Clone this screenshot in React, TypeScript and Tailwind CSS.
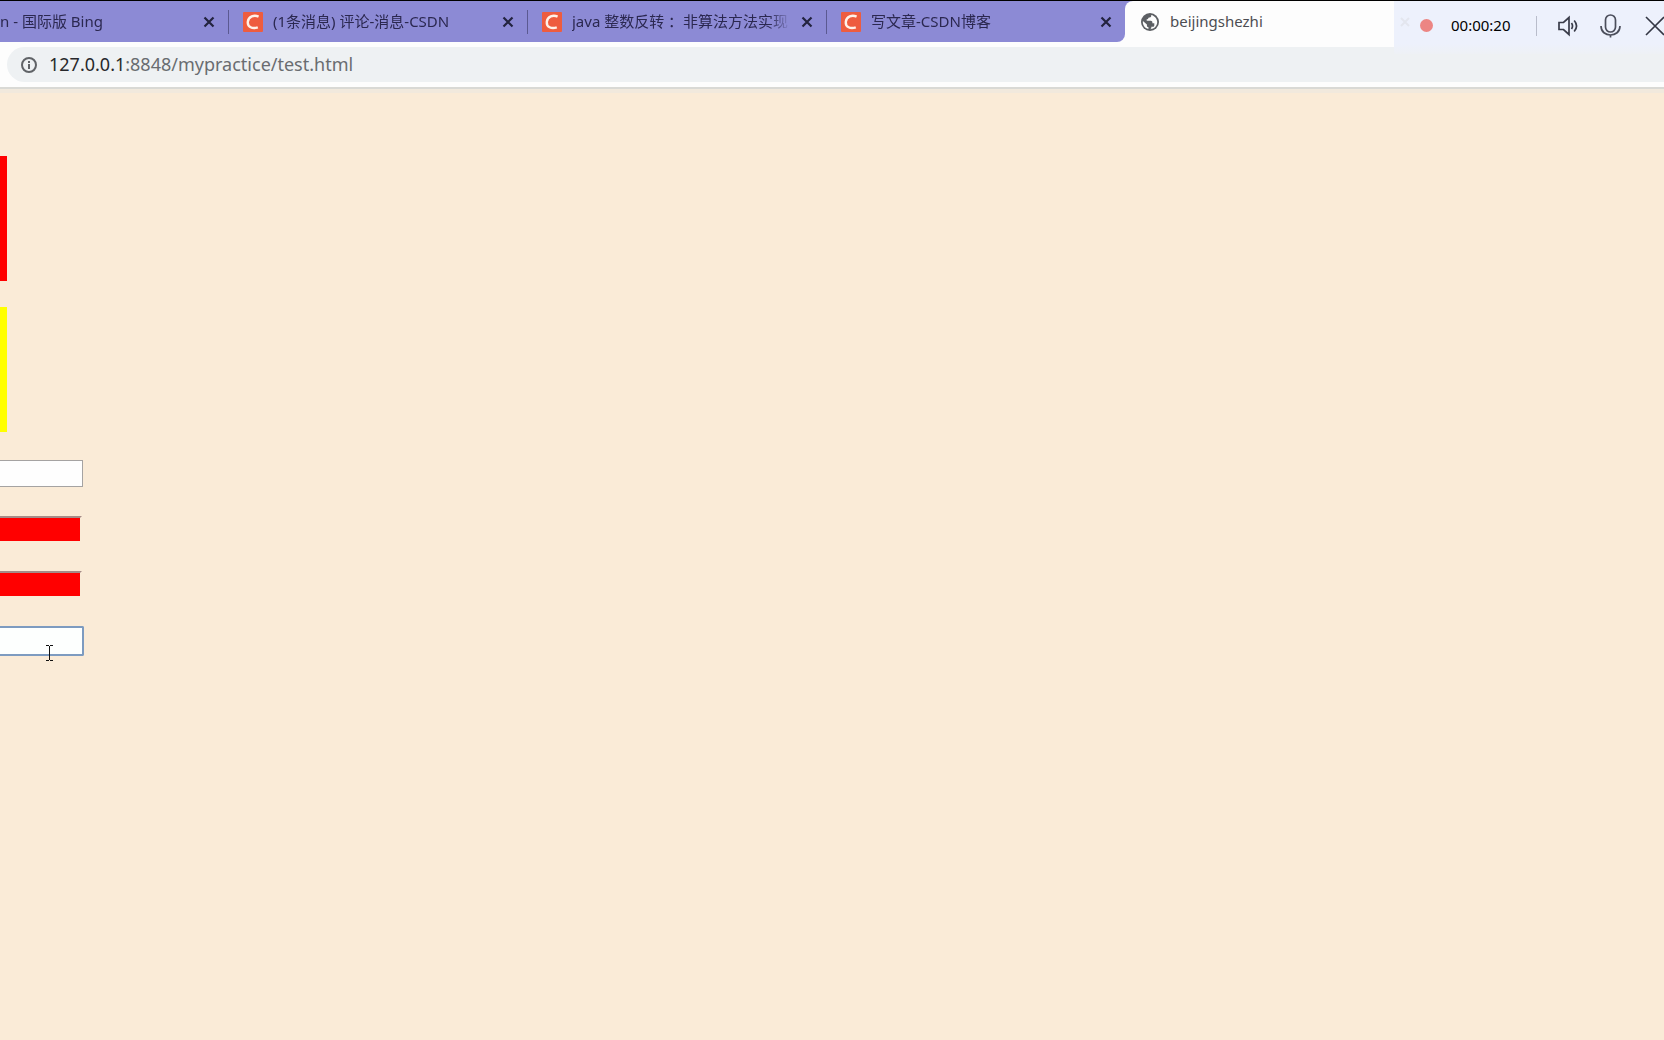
import type { ReactNode } from "react";

type Tab = {
  title: string;
  icon?: ReactNode;
  firstTab?: boolean;
};

function CsdnIcon() {
  return (
    <svg className="size-5 shrink-0" viewBox="0 0 20 20" aria-hidden="true">
      <rect width="20" height="20" rx="1" fill="#ee5c3f" />
      <path
        d="M15.6 4.600C11.200 2.600 5.400 4.200 4.800 9.800c-.5 5.200 4.600 7.400 10 5.500"
        fill="none"
        stroke="#fff1e8"
        strokeWidth="2.400"
      />
    </svg>
  );
}

function GlobeIcon() {
  return (
    <svg className="size-5 shrink-0" viewBox="0 0 20 20" aria-hidden="true">
      <circle cx="10" cy="10" r="9" fill="#5c5f63" />
      <path
        d="M11.200 2.900c.4 1.900-.8 2.600-2.200 2.700-.6.100-.6 1.600-1.800 1.700-1 .2-.8 1.500.1 1.500h3.500c1 0 1.600.8 1.600 1.800v.6h1.900v2.200c0 .8-.7 1.300-1.500 1.300h-1.500v1.600c0 .5-.5.9-1 .9 3.800-.1 6.900-3.300 6.900-7.200 0-3.400-2.600-6.400-6-7.100zM2.900 9c-.5 3.900 1.900 7.300 5.500 8v-2c-.9 0-1.500-.7-1.500-1.600v-.8z"
        fill="#fdfdfd"
      />
    </svg>
  );
}

function CloseIcon() {
  return (
    <svg className="size-3" viewBox="0 0 12 12" aria-hidden="true">
      <path d="M1.500 1.500l9 9m0-9l-9 9" stroke="#23233f" strokeWidth="2.200" />
    </svg>
  );
}

const tabs: Tab[] = [
  { title: "n - 国际版 Bing", firstTab: true },
  { title: "(1条消息) 评论-消息-CSDN", icon: <CsdnIcon /> },
  { title: "java 整数反转 ：非算法方法实现", icon: <CsdnIcon /> },
  { title: "写文章-CSDN博客", icon: <CsdnIcon /> },
];

function BrowserTab({ title, icon, firstTab }: Tab) {
  return (
    <div
      className={
        firstTab
          ? "flex h-full w-[228px] shrink-0 items-center pr-[13px]"
          : "flex h-full w-[299px] shrink-0 items-center gap-2.5 pr-[13px] pl-[15px]"
      }
    >
      {icon}
      <span className="min-w-0 flex-1 mask-r-from-90% whitespace-nowrap">
        {title}
      </span>
      <button type="button" aria-label="Close tab" className="flex size-3 shrink-0">
        <CloseIcon />
      </button>
    </div>
  );
}

function TabStrip() {
  return (
    <div className="flex h-[42px] overflow-hidden border-t border-black bg-[#fdfdfd] text-[15px] text-[#2b2850]">
      <div className="flex h-full shrink-0 items-center rounded-br-lg bg-[#8c8ad5]">
        {tabs.map((tab, index) => (
          <div key={tab.title} className="flex h-full items-center">
            {index > 0 && <span className="-mr-px h-6 w-px bg-[#5b5991]" />}
            <BrowserTab {...tab} />
          </div>
        ))}
      </div>
      <div className="flex flex-1 bg-linear-to-b from-[#8c8ad5] from-50% to-[#fdfdfd] to-50%">
        <div className="flex flex-1 items-center gap-2.5 rounded-tl-lg bg-[#fdfdfd] pl-[15px] text-[#4c4d52]">
          <GlobeIcon />
          <span>beijingshezhi</span>
        </div>
      </div>
    </div>
  );
}

function AddressBar() {
  return (
    <div className="h-[45px] bg-[#fdfdfd] pt-[5px] pl-[7px]">
      <div className="flex h-[35px] items-center gap-3 rounded-l-full bg-[#eef1f3] pl-3.5">
        <svg className="size-4 shrink-0" viewBox="0 0 16 16" fill="none" aria-hidden="true">
          <circle cx="8" cy="8" r="7" stroke="#606367" strokeWidth="2" />
          <path d="M8 7v5M8 4v2" stroke="#606367" strokeWidth="2" />
        </svg>
        <span className="pb-0.5 text-lg text-[#696c70]">
          <span className="text-[#27282b]">127.0.0.1</span>:8848/mypractice/test.html
        </span>
      </div>
    </div>
  );
}

function Recorder() {
  return (
    <div className="absolute top-px right-0 flex h-[53px] w-[270px] items-center overflow-hidden bg-linear-to-b from-[#edf1fc] from-80% to-[#eef1f5] pb-1 text-black">
      <svg className="mb-2 ml-1.5 size-2.5 shrink-0" viewBox="0 0 10 10" aria-hidden="true">
        <path d="M1 1l8 8M9 1L1 9" stroke="#e3e6ee" strokeWidth="2" />
      </svg>
      <span className="ml-2.5 size-[13px] shrink-0 rounded-full bg-[#ec8583]" />
      <span className="ml-[18px] w-[60px] shrink-0 text-[15px]">00:00:20</span>
      <span className="ml-[25px] h-5 w-px shrink-0 bg-[#b9bdcb]" />
      <button type="button" aria-label="Speaker" className="ml-5 shrink-0">
        <svg className="size-[22px]" viewBox="0 0 22 22" fill="none" stroke="#393c49" strokeWidth="1.700">
          <path d="M2 7.500h4.500L12 2.500v17l-5.500-5H2zM14.500 8c1.300 1.900 1.300 4.100 0 6M17.200 5.500c3 3.500 3 7.500 0 11" />
        </svg>
      </button>
      <button type="button" aria-label="Microphone" className="ml-[19px] shrink-0">
        <svg className="size-6" viewBox="0 0 24 24" fill="none" stroke="#4b4e5b" strokeWidth="1.700">
          <rect x="7.500" y="1" width="10" height="17" rx="5" />
          <path d="M3 12c0 12 19 12 19 0M12.500 20.500v3" />
        </svg>
      </button>
      <button type="button" aria-label="Close recorder" className="ml-[23px] shrink-0">
        <svg className="size-5" viewBox="0 0 20 20" fill="none" stroke="#343744" strokeWidth="1.600">
          <path d="M1 1l18 18M19 1L1 19" />
        </svg>
      </button>
    </div>
  );
}

export default function App() {
  return (
    <div className="relative min-h-screen overflow-hidden bg-[#faebd7] font-['Noto_Sans','Noto_Sans_CJK_SC',sans-serif]">
      <header>
        <TabStrip />
        <AddressBar />
        <div className="h-1.5 border-t-2 border-[#d9d9d5] bg-[#f1e9dd]" />
      </header>
      <Recorder />

      <main className="flex flex-col items-start pt-[63px]">
        <div className="h-[125px] w-[7px] bg-[#ff0000]" />
        <div className="mt-[26px] h-[125px] w-[7px] bg-[#ffff00]" />
        <input
          aria-label="Field 1"
          className="mt-7 h-[27px] w-[83px] border border-l-0 border-[#a5a3a2] bg-[#fefefe] outline-none"
        />
        <input
          aria-label="Field 2"
          className="mt-[29px] h-[27px] w-[82px] border-2 border-l-0 border-transparent border-t-[#a58c88] bg-[#ff0000] bg-clip-padding outline-none"
        />
        <input
          aria-label="Field 3"
          className="mt-7 h-[27px] w-[82px] border-2 border-l-0 border-transparent border-t-[#a58c88] bg-[#ff0000] bg-clip-padding outline-none"
        />
        <input
          aria-label="Field 4"
          className="mt-7 h-[30px] w-[84px] rounded-r-xs border-2 border-l-0 border-[#7d9bc0] bg-[#fdfffe] outline-none"
        />
      </main>

      {/* text cursor */}
      <svg
        className="absolute top-[645px] left-[45px] h-4 w-[9px]"
        viewBox="0 0 9 16"
        fill="none"
        stroke="#111"
        aria-hidden="true"
      >
        <path d="M1 .5h3M5 .5h3M4.500 1v14M1 15.500h3M5 15.500h3" />
      </svg>
    </div>
  );
}
